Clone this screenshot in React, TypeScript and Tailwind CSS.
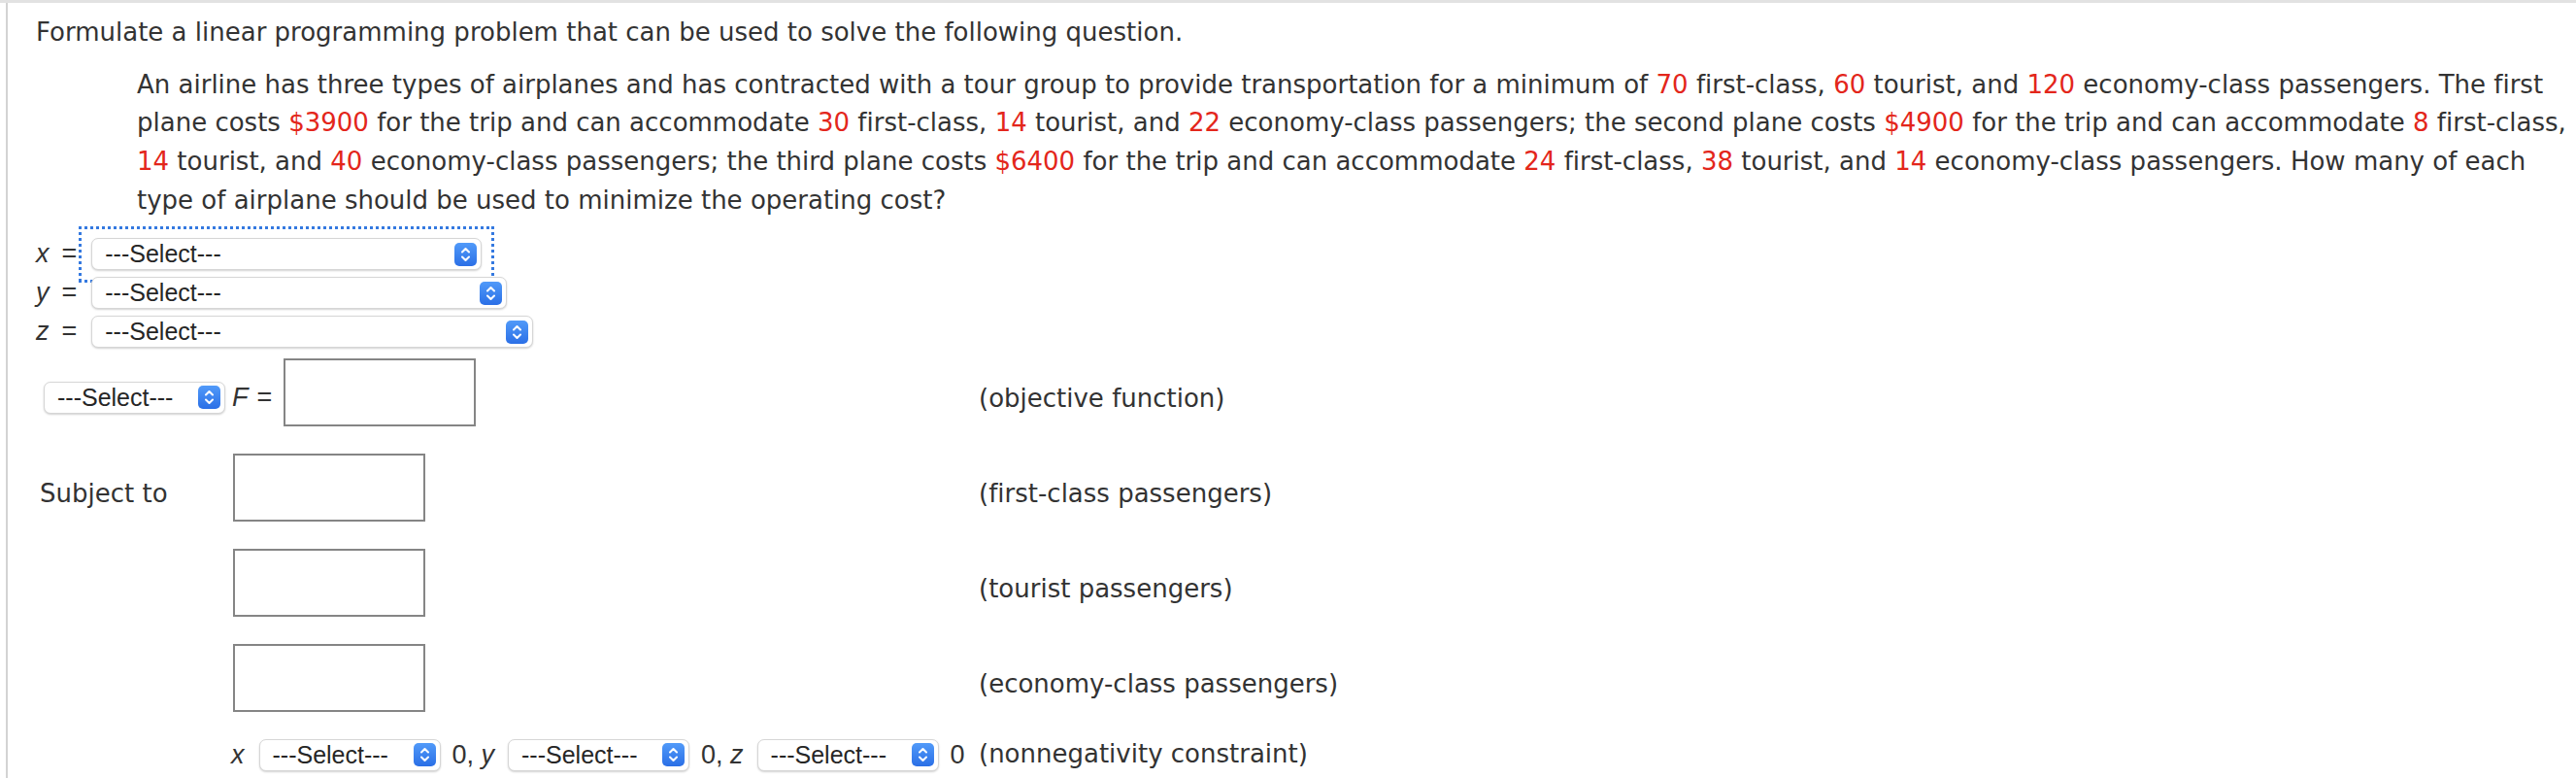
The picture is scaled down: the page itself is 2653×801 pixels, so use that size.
import React from 'react';

const red = 'text-[#e3261b]';
const math = "font-['Liberation_Sans',Arial,sans-serif] text-[27px]";

function Stepper() {
  return (
    <span className="ml-auto mr-[4px] flex h-[24px] w-[23px] shrink-0 items-center justify-center rounded-[5px] bg-linear-to-b from-[#519af9] to-[#2b6fe6]">
      <svg width="23" height="24" viewBox="0 0 23 24" fill="none">
        <path d="M8 9.5L11.5 6L15 9.5" stroke="white" strokeWidth="2" strokeLinecap="round" strokeLinejoin="round" />
        <path d="M8 14.5L11.5 18L15 14.5" stroke="white" strokeWidth="2" strokeLinecap="round" strokeLinejoin="round" />
      </svg>
    </span>
  );
}

function Select({ className = '' }: { className?: string }) {
  return (
    <div
      className={`relative z-10 flex h-[33px] shrink-0 items-center rounded-[7px] border border-[#d6d6d6] bg-white pl-[13px] shadow-[0_1px_2px_rgba(0,0,0,0.18)] ${className}`}
    >
      <span className="font-['Liberation_Sans',Arial,sans-serif] text-[25px] leading-none text-[#262626]">---Select---</span>
      <Stepper />
    </div>
  );
}

function Box() {
  return <input type="text" className="h-[70px] w-[198px] shrink-0 border-2 border-[#858585] bg-white outline-none" />;
}

function FocusRing() {
  return (
    <div className="pointer-events-none absolute -bottom-[13px] -left-[13px] -right-[13px] -top-[12px]">
      <div className="absolute left-0 right-0 top-0 h-[3px] bg-[repeating-linear-gradient(90deg,#3479e0_0_3px,transparent_3px_6px)]" />
      <div className="absolute bottom-0 left-0 right-0 h-[3px] bg-[repeating-linear-gradient(90deg,#3479e0_0_3px,transparent_3px_6px)]" />
      <div className="absolute bottom-0 left-0 top-0 w-[3px] bg-[repeating-linear-gradient(180deg,#3479e0_0_3px,transparent_3px_6px)]" />
      <div className="absolute bottom-0 right-0 top-0 w-[3px] bg-[repeating-linear-gradient(180deg,#3479e0_0_3px,transparent_3px_6px)]" />
    </div>
  );
}

function VarRow({ name, width, ring }: { name: string; width: string; ring?: boolean }) {
  return (
    <div className="flex items-center">
      <span className={`${math} italic leading-none`}>{name}</span>
      <span className={`${math} ml-[13px] leading-none`}>=</span>
      <div className="relative ml-[15px]">
        {ring && <FocusRing />}
        <Select className={width} />
      </div>
    </div>
  );
}

const R = ({ children }: { children: React.ReactNode }) => <span className={red}>{children}</span>;

export default function App() {
  return (
    <div className="h-[801px] w-full overflow-hidden bg-white font-['DejaVu_Sans',Verdana,sans-serif] text-[26px] text-[#333] [font-variant-ligatures:none]">
      <div className="h-[3px] bg-[#e2e2e2]" />
      <div className="ml-[6px] h-[798px] border-l-2 border-[#d3d3d3] pl-[29px] pt-[11px]">
        <p className="whitespace-nowrap leading-[39.5px]">
          Formulate a linear programming problem that can be used to solve the following question.
        </p>

        <div className="mt-[14px] whitespace-nowrap pl-[104px] leading-[39.7px]">
          <div>
            An airline has three types of airplanes and has contracted with a tour group to provide transportation for a
            minimum of <R>70</R> first-class, <R>60</R> tourist, and <R>120</R> economy-class passengers. The first
          </div>
          <div>
            plane costs <R>$3900</R> for the trip and can accommodate <R>30</R> first-class, <R>14</R> tourist, and{' '}
            <R>22</R> economy-class passengers; the second plane costs <R>$4900</R> for the trip and can accommodate{' '}
            <R>8</R> first-class,
          </div>
          <div>
            <R>14</R> tourist, and <R>40</R> economy-class passengers; the third plane costs <R>$6400</R> for the trip
            and can accommodate <R>24</R> first-class, <R>38</R> tourist, and <R>14</R> economy-class passengers. How
            many of each
          </div>
          <div>type of airplane should be used to minimize the operating cost?</div>
        </div>

        <div className="mt-[19px] flex flex-col gap-[7px]">
          <VarRow name="x" width="w-[402px]" ring />
          <VarRow name="y" width="w-[428px]" />
          <VarRow name="z" width="w-[455px]" />
        </div>

        {/* objective function */}
        <div className="mt-[11px] flex items-center">
          <div className="w-[200px] shrink-0 pt-[10px]">
            <Select className="ml-[8px] w-[187px]" />
          </div>
          <div className="flex w-[771px] shrink-0 items-center">
            <span className={`${math} ml-[2px] mt-[10px] italic leading-none`}>F</span>
            <span className={`${math} ml-[9px] mt-[10px] leading-none`}>=</span>
            <div className="ml-[12px]">
              <Box />
            </div>
          </div>
          <span className="pt-[12px] leading-[39.5px]">(objective function)</span>
        </div>

        {/* constraints */}
        <div className="mt-[28px] flex items-center">
          <div className="w-[200px] shrink-0 pl-[4px] pt-[12px] leading-[39.5px]">Subject to</div>
          <div className="w-[771px] shrink-0 pl-[3px]">
            <Box />
          </div>
          <span className="pt-[12px] leading-[39.5px]">(first-class passengers)</span>
        </div>

        <div className="mt-[28px] flex items-center">
          <div className="w-[200px] shrink-0" />
          <div className="w-[771px] shrink-0 pl-[3px]">
            <Box />
          </div>
          <span className="pt-[12px] leading-[39.5px]">(tourist passengers)</span>
        </div>

        <div className="mt-[28px] flex items-center">
          <div className="w-[200px] shrink-0" />
          <div className="w-[771px] shrink-0 pl-[3px]">
            <Box />
          </div>
          <span className="pt-[12px] leading-[39.5px]">(economy-class passengers)</span>
        </div>

        {/* nonnegativity */}
        <div className="mt-[24px] flex items-center">
          <div className="w-[200px] shrink-0" />
          <div className={`flex w-[771px] shrink-0 items-center ${math} leading-none`}>
            <span className="ml-[1px] italic">x</span>
            <Select className="ml-[15px] w-[187px]" />
            <span className="ml-[12px]">
              0, <span className="italic">y</span>
            </span>
            <Select className="ml-[14px] w-[187px]" />
            <span className="ml-[12px]">
              0, <span className="italic">z</span>
            </span>
            <Select className="ml-[14px] w-[187px]" />
            <span className="ml-[12px]">0</span>
          </div>
          <span className="leading-[39.5px]">(nonnegativity constraint)</span>
        </div>
      </div>
    </div>
  );
}
